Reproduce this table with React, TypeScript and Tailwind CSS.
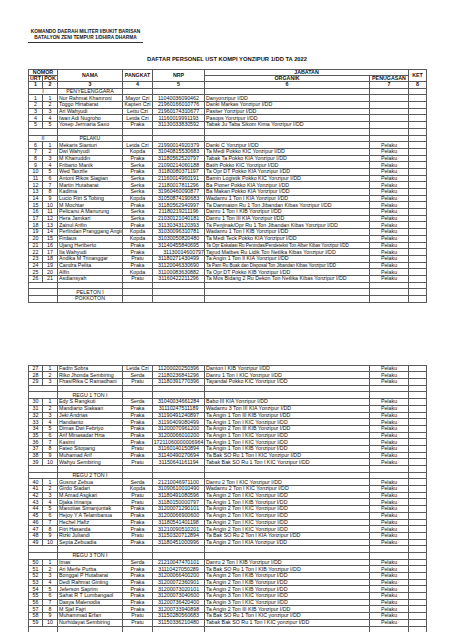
import React from "react";

type Row = [string, string, string, string, string, string, string];

const block1: (Row | string)[] = [
  "I|PENYELENGGARA",
  ["1", "1", "Nur Rahmat Khamroni", "Mayor Czi", "11040036090462", "Danyonzipur I/DD", ""],
  ["2", "2", "Toggo Hirtabarat", "Kapten Czi", "21960166010776", "Danki Markas Yonzipur I/DD", ""],
  ["3", "3", "Ari Wahyudi", "Lettu Czi", "21960174310677", "Pasiter Yonzipur I/DD", ""],
  ["4", "4", "Iwan Adi Nugroho", "Letda Czi", "11160019991193", "Pasops Yonzipur I/DD", ""],
  ["5", "5", "Yosep Jermaria Saxo", "Praka", "31130033830592", "Tabak Ju Taba Sikom Kima Yonzipur I/DD", ""],
  "|",
  "II|PELAKU",
  ["6", "1", "Mekaris Sianturi", "Letda Czi", "21990014920379", "Danki C Yonzipur I/DD", "Pelaku"],
  ["7", "2", "Dwi Wahyudi", "Kopda", "31040815530683", "Ta Medi Pokko KIC Yonzipur I/DD", "Pelaku"],
  ["8", "3", "M Khairuddin", "Praka", "31180562520797", "Tabak Ta Pokko KIA Yonzipur I/DD", "Pelaku"],
  ["9", "4", "Fribarto Manik", "Serka", "21090214060188", "Batih Pokko KIC Yonzipur I/DD", "Pelaku"],
  ["10", "5", "Wed Taxzile", "Praka", "31180080371197", "Ta Opr DT Pokko KIA Yonzipur I/DD", "Pelaku"],
  ["11", "6", "Antoni Rikos Siagian", "Serka", "21160014960191", "Bamin Logistik Pokko KIC Yonzipur I/DD", "Pelaku"],
  ["12", "7", "Martin Hutabarat", "Serka", "21180017811296", "Ba Pioner Pokko KIA Yonzipur I/DD", "Pelaku"],
  ["13", "8", "Kadima", "Serka", "31960460090877", "Ba Makan Pokko KIA Yonzipur I/DD", "Pelaku"],
  ["14", "9", "Lucio Fitri S Tobing", "Kopda", "31050874190683", "Wadanru 1 Ton I KIA Yonzipur I/DD", "Pelaku"],
  ["15", "10", "M Mochtar", "Praka", "31180562940997", "Ta Danmaton Ru 1 Ton Jibandan Kibas Yonzipur I/DD", "Pelaku"],
  ["16", "11", "Pelicanu A Manurung", "Serka", "21180219211196", "Danru 1 Ton I KIB Yonzipur I/DD", "Pelaku"],
  ["17", "12", "Hera Jamkari", "Serka", "21030121040181", "Danru 1 Ton III KIA Yonzipur I/DD", "Pelaku"],
  ["18", "13", "Zainul Arifin", "Praka", "31130343120393", "Ta Penjinak/Opr Ru 1 Ton Jibandan Kibas Yonzipur I/DD", "Pelaku"],
  ["19", "14", "Perlindan Pranggang Angin", "Kopda", "31030096310781", "Wadanru 1 Ton I KIB Yonzipur I/DD", "Pelaku"],
  ["20", "15", "Firdaus", "Kopda", "31030050820480", "Ta Medi Teck Pokko KIA Yonzipur I/DD", "Pelaku"],
  ["21", "16", "Ujang Heriberto", "Praka", "31140455840695", "Ta Opr Eskalasi Ru Penindas/Pendeteksi Ton Alber Kibas Yonzipur I/DD", "Pelaku"],
  ["22", "17", "Ila Wahyudi", "Praka", "31130014600797", "Tayud Matbes Ru Lidik Ton Netlika Kibas Yonzipur I/DD", "Pelaku"],
  ["23", "18", "Andika M Trinanggar", "Pratu", "31180271430499", "Ta Angin 1 Ton II KIA Yonzipur I/DD", "Pelaku"],
  ["24", "19", "Candra Pelita", "Praka", "31120046330690", "Ta Pam Ru Buak dan Disposal Ton Jibandan Kibas Yonzipur I/DD", "Pelaku"],
  ["25", "20", "Alfin", "Kopda", "31100083630882", "Ta Opr DT Pokko KIB Yonzipur I/DD", "Pelaku"],
  ["26", "21", "Asdiansyah", "Pratu", "31160422211296", "Ta Mos Bidang 2 Ru Dekon Ton Netlika Kibas Yonzipur I/DD", "Pelaku"],
  "|",
  "|PELETON I",
  "|POKKOTON",
];

const block2: (Row | string)[] = [
  ["27", "1", "Fadm Sobra", "Letda Czi", "11200020250396", "Danton I KIB Yonzipur I/DD", "Pelaku"],
  ["28", "2", "Riko Jhonda Sembiring", "Serda", "21180236841296", "Danru 1 Ton I KIC Yonzipur I/DD", "Pelaku"],
  ["29", "3", "Fhas/Rika C Ramadhani", "Pratu", "31180391770396", "Tayandal Pokko KIC Yonzipur I/DD", "Pelaku"],
  "|",
  "|REGU 1 TON I",
  ["30", "1", "Edy S Rangkuti", "Serda", "31040034661284", "Babo III KIA Yonzipur I/DD", "Pelaku"],
  ["31", "2", "Mandiarto Siakaan", "Praka", "31110247511189", "Wadanru 3 Ton III KIA Yonzipur I/DD", "Pelaku"],
  ["32", "3", "Jeki Andrias", "Praka", "31190491240897", "Ta Angin 1 Ton III KIB Yonzipur I/DD", "Pelaku"],
  ["33", "4", "Handianto", "Praka", "31190409080499", "Ta Angin 1 Ton I KIC Yonzipur I/DD", "Pelaku"],
  ["34", "5", "Dimas Dwi Febriyo", "Praka", "31200070961200", "Ta Angin 2 Ton III KIB Yonzipur I/DD", "Pelaku"],
  ["35", "6", "Arif Minasadar Hrta", "Praka", "31200066010200", "Ta Angin 1 Ton I KIC Yonzipur I/DD", "Pelaku"],
  ["36", "7", "Kasimi", "Praka", "17211060000006964", "Ta Angin 1 Ton I KIC Yonzipur I/DD", "Pelaku"],
  ["37", "8", "Fateo Sitopang", "Pratu", "31160140150894", "Ta Angin 1 Ton I KIB Yonzipur I/DD", "Pelaku"],
  ["38", "9", "Muhamad Arif", "Praka", "31140490270694", "Ta Bak SO Ru 1 Ton I KIC Yonzipur I/DD", "Pelaku"],
  ["39", "10", "Wahyu Sembiring", "Pratu", "31150641161194", "Tabak Bak SO Ru 1 Ton I KIC Yonzipur I/DD", "Pelaku"],
  "|",
  "|REGU 2 TON I",
  ["40", "1", "Gusnur Zebua", "Serda", "21210046971100", "Danru 2 Ton I KIC Yonzipur I/DD", "Pelaku"],
  ["41", "2", "Girdo Siadari", "Kopda", "31090610010490", "Wadanru 2 Ton I KIC Yonzipur I/DD", "Pelaku"],
  ["42", "3", "M Amad Asgkari", "Pratu", "31180491080596", "Ta Angin 2 Ton I KIC Yonzipur I/DD", "Pelaku"],
  ["43", "4", "Djaka Irinanja", "Pratu", "31180150000797", "Ta Angin 1 Ton I KIB Yonzipur I/DD", "Pelaku"],
  ["44", "5", "Manotias Simanjuntak", "Praka", "31200071290101", "Ta Angin 2 Ton I KIC Yonzipur I/DD", "Pelaku"],
  ["45", "6", "Hejoy Y A Telambanua", "Praka", "31200066900600", "Ta Angin 2 Ton I KIC Yonzipur I/DD", "Pelaku"],
  ["46", "7", "Hechel Hafiz", "Praka", "31180541401198", "Ta Angin 2 Ton I KIC Yonzipur I/DD", "Pelaku"],
  ["47", "8", "Fitri Hasanda", "Praka", "31210090510201", "Ta Angin 2 Ton I KIC Yonzipur I/DD", "Pelaku"],
  ["48", "9", "Rizki Juliandi", "Pratu", "31150320712894", "Ta Bak SO Ru 2 Ton I KIA Yonzipur I/DD", "Pelaku"],
  ["49", "10", "Septa Zebuadia", "Praka", "31180451000996", "Ta Angin 2 Ton I KIA Yonzipur I/DD", "Pelaku"],
  "|",
  "|REGU 3 TON I",
  ["50", "1", "Imas", "Serda", "21210047470101", "Danru 2 Ton I KIB Yonzipur I/DD", "Pelaku"],
  ["51", "2", "Ari Merfe Purba", "Praka", "31110427050289", "Ta Bak SO Ru 1 Ton I KIB Yonzipur I/DD", "Pelaku"],
  ["52", "3", "Bonggal P Hutabarat", "Praka", "31200066400200", "Ta Angin 2 Ton I KIB Yonzipur I/DD", "Pelaku"],
  ["53", "4", "Dedi Rahmat Ginting", "Praka", "31200072360901", "Ta Angin 2 Ton I KIB Yonzipur I/DD", "Pelaku"],
  ["54", "5", "Jeferson Saprim", "Praka", "31200073020101", "Ta Angin 2 Ton I KIB Yonzipur I/DD", "Pelaku"],
  ["55", "6", "Sahat R T Lumbangaol", "Praka", "31200073040600", "Ta Angin 3 Ton I KIC Yonzipur I/DD", "Pelaku"],
  ["56", "7", "Dasya Malenodia", "Praka", "31200736420400", "Ta Angin 3 Ton I KIC Yonzipur I/DD", "Pelaku"],
  ["57", "8", "M Sjaf Fajri", "Praka", "31200733940898", "Ta Angin 2 Ton III KIB Yonzipur I/DD", "Pelaku"],
  ["58", "9", "Muhammad Erfan", "Pratu", "31150280560683", "Ta Bak SO Ru 1 Ton I KIC yonzipur I/DD", "Pelaku"],
  ["59", "10", "Nurhidayat Sembiring", "Pratu", "31150336210480", "Tabak Bak SO Ru 1 Ton I KIC yonzipur I/DD", "Pelaku"],
  "|",
  "|",
];

// NRP yang tercetak mepet kanan di dokumen asli
const nrpRight = new Set(["22"]);

const td = "border border-[#5a5a5a] p-0 whitespace-nowrap overflow-hidden";

function Cols() {
  return (
    <colgroup>
      <col className="w-[14px]" />
      <col className="w-[15px]" />
      <col className="w-[65px]" />
      <col className="w-[30px]" />
      <col className="w-[52px]" />
      <col className="w-[165px]" />
      <col className="w-[39px]" />
      <col className="w-[18px]" />
    </colgroup>
  );
}

function Body({ rows }: { rows: (Row | string)[] }) {
  return (
    <tbody>
      {rows.map((r, i) => {
        if (typeof r === "string") {
          const [roman, label] = r.split("|");
          return (
            <tr key={i} className="h-[6.7px]">
              <td colSpan={2} className={`${td} text-center`}>{roman}</td>
              <td className={`${td} text-center`}>{label}</td>
              <td className={td} />
              <td className={td} />
              <td className={td} />
              <td className={td} />
              <td className={td} />
            </tr>
          );
        }
        const longJob = r[5].length > 58;
        return (
          <tr key={i} className="h-[6.7px]">
            <td className={`${td} text-center`}>{r[0]}</td>
            <td className={`${td} text-center`}>{r[1]}</td>
            <td className={`${td} pl-[1px]`}>{r[2]}</td>
            <td className={`${td} text-center`}>{r[3]}</td>
            <td className={`${td} ${nrpRight.has(r[0]) ? "text-right" : "text-center"}`}>{r[4]}</td>
            <td className={`${td} pl-[1px] ${longJob ? "text-[4.6px] tracking-[-0.05px]" : ""}`}>{r[5]}</td>
            <td className={`${td} text-center`}>{r[6]}</td>
            <td className={td} />
          </tr>
        );
      })}
    </tbody>
  );
}

export default function App() {
  return (
    <div className="h-[632px] w-[474px] overflow-hidden bg-white font-['Liberation_Sans',Arial,sans-serif] text-[#111]">
      <div className="ml-[28px] flex w-[115px] flex-col items-center border-b border-[#333] pt-[29px] pb-[2px] text-[4.8px] font-bold leading-[5.5px]">
        <p className="whitespace-nowrap">KOMANDO DAERAH MILITER I/BUKIT BARISAN</p>
        <p className="whitespace-nowrap">BATALYON ZENI TEMPUR 1/DHIRA DHARMA</p>
      </div>

      <h1 className="ml-[28px] mt-[13px] w-[398px] text-center text-[5.8px] font-bold leading-[7px]">
        DAFTAR PERSONEL UST KOMPI YONZIPUR 1/DD TA 2022
      </h1>

      <table className="ml-[28px] mt-[6px] w-[398px] table-fixed border-collapse text-[5.3px] leading-[5px]">
        <Cols />
        <thead>
          <tr className="h-[6px]">
            <th colSpan={2} className={`${td} font-bold`}>NOMOR</th>
            <th rowSpan={2} className={`${td} font-bold`}>NAMA</th>
            <th rowSpan={2} className={`${td} font-bold`}>PANGKAT</th>
            <th rowSpan={2} className={`${td} font-bold`}>NRP</th>
            <th colSpan={2} className={`${td} font-bold`}>JABATAN</th>
            <th rowSpan={2} className={`${td} font-bold`}>KET</th>
          </tr>
          <tr className="h-[6px]">
            <th className={`${td} font-bold`}>URT</th>
            <th className={`${td} font-bold`}>POK</th>
            <th className={`${td} font-bold`}>ORGANIK</th>
            <th className={`${td} font-bold`}>PENUGASAN</th>
          </tr>
          <tr className="h-[6.7px]">
            {["1", "2", "3", "4", "5", "6", "7", "8"].map((n) => (
              <th key={n} className={`${td} font-bold`}>{n}</th>
            ))}
          </tr>
        </thead>
        <Body rows={block1} />
      </table>

      <table className="ml-[28px] mt-[62px] w-[398px] table-fixed border-collapse text-[5.3px] leading-[5px]">
        <Cols />
        <Body rows={block2} />
      </table>
    </div>
  );
}
